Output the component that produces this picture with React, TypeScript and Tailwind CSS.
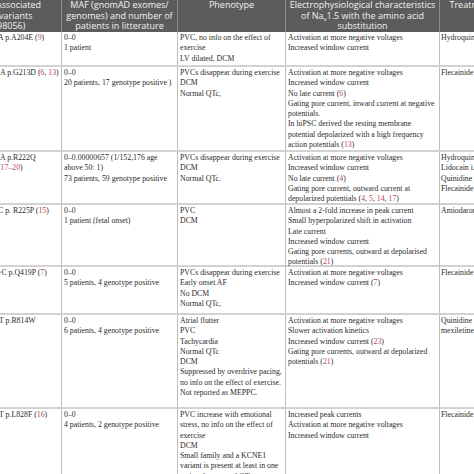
import React from "react";

type C1 = { t: string; ml: string };
type Row = { h: string; c1: C1[]; c2: string[]; c3: string[]; c4: string[]; c5: string[] };

const rows: Row[] = [
  {
    h: "h-[35px]",
    c1: [{ t: "A p.A204E ({9})", ml: "-ml-[2px]" }],
    c2: ["0–0", "1 patient"],
    c3: ["PVC, no info on the effect of", "exercise", "LV dilated, DCM"],
    c4: ["Activation at more negative voltages", "Increased window current"],
    c5: ["Hydroquinidine"],
  },
  {
    h: "h-[85px]",
    c1: [{ t: "A p.G213D ({6}, {13})", ml: "ml-0" }],
    c2: ["0–0", "20 patients, 17 genotype positive )"],
    c3: ["PVCs disappear during exercise", "DCM", "Normal QTc,"],
    c4: [
      "Activation at more negative voltages",
      "Increased window current",
      "No late current ({6})",
      "Gating pore current, inward current at negative",
      "potentials.",
      "In hiPSC derived the resting membrane",
      "potential depolarized with a high frequency",
      "action potentials ({13})",
    ],
    c5: ["Flecainide"],
  },
  {
    h: "h-[53px]",
    c1: [
      { t: "A p.R222Q", ml: "ml-0" },
      { t: "({17–20})", ml: "-ml-[2px]" },
    ],
    c2: ["0–0.00000657 (1/152,176 age", "above 50: 1)", "73 patients, 59 genotype positive"],
    c3: ["PVCs disappear during exercise", "DCM", "Normal QTc."],
    c4: [
      "Activation at more negative voltages",
      "Increased window current",
      "No late current ({4})",
      "Gating pore current, outward current at",
      "depolarized potentials ({4}, {5}, {14}, {17})",
    ],
    c5: ["Hydroquinidine", "Lidocain i.v.", "Quinidine", "Flecainide"],
  },
  {
    h: "h-[62px]",
    c1: [{ t: "C p. R225P ({15})", ml: "-ml-[2px]" }],
    c2: ["0–0", "1 patient (fetal onset)"],
    c3: ["PVC", "DCM"],
    c4: [
      "Almost a 2-fold increase in peak current",
      "Small hyperpolarized shift in activation",
      "Late current",
      "Increased window current",
      "Gating pore currents, outward at depolarised",
      "potentials ({21})",
    ],
    c5: ["Amiodarone"],
  },
  {
    h: "h-[48px]",
    c1: [{ t: ">C p.Q419P ({7})", ml: "-ml-[3px]" }],
    c2: ["0–0", "5 patients, 4 genotype positive"],
    c3: ["PVCs disappear during exercise", "Early onset AF", "No DCM", "Normal QTc,"],
    c4: ["Activation at more negative voltages", "Increased window current ({7})"],
    c5: ["Flecainide"],
  },
  {
    h: "h-[94px]",
    c1: [{ t: "T p.R814W", ml: "-ml-[1px]" }],
    c2: ["0–0", "6 patients, 4 genotype positive"],
    c3: [
      "Atrial flutter",
      "PVC",
      "Tachycardia",
      "Normal QTc",
      "DCM",
      "Suppressed by overdrive pacing,",
      "no info on the effect of exercise.",
      "Not reported as MEPPC.",
    ],
    c4: [
      "Activation at more negative voltages",
      "Slower activation kinetics",
      "Increased window current ({23})",
      "Gating pore currents, outward at depolarized",
      "potentials ({21})",
    ],
    c5: ["Quinidine", "mexiletine"],
  },
  {
    h: "h-[80px]",
    c1: [{ t: "T p.L828F ({16})", ml: "-ml-[1px]" }],
    c2: ["0–0", "4 patients, 2 genotype positive"],
    c3: [
      "PVC increase with emotional",
      "stress, no info on the effect of",
      "exercise",
      "DCM",
      "Small family and a KCNE1",
      "variant is present at least in one",
      "patient but normal QTc",
    ],
    c4: ["Increased peak currents", "Activation at more negative voltages", "Increased window current"],
    c5: ["Flecainide"],
  },
];

function Line({ t, cls = "" }: { t: string; cls?: string }) {
  const parts = t.split(/(\{[^}]*\})/);
  return (
    <div className={"whitespace-nowrap " + cls}>
      {parts.map((p, i) =>
        p.startsWith("{") ? (
          <span key={i} className="text-[#b4475a]">
            {p.slice(1, -1)}
          </span>
        ) : (
          <span key={i}>{p}</span>
        )
      )}
    </div>
  );
}

const grid = "grid grid-cols-[61px_116px_108px_154px_64px] w-[503px]";

export default function App() {
  return (
    <div className="w-[474px] h-[474px] overflow-hidden bg-white">
      <div className={grid + " h-[32px] bg-[#5c5c5c] text-[#f2f2f2] font-['Open_Sans',sans-serif] text-[9px] leading-[10.5px]"}>
        <div className="overflow-hidden">
          <div className="whitespace-nowrap -ml-[4px]">Associated</div>
          <div className="whitespace-nowrap -ml-[1px]">variants</div>
          <div className="whitespace-nowrap -ml-[3px]">98056)</div>
        </div>
        <div className="border-l border-[#8c8c8c] text-center">
          <div>MAF (gnomAD exomes/</div>
          <div>genomes) and number of</div>
          <div>patients in litterature</div>
        </div>
        <div className="border-l border-[#8c8c8c] text-center">
          <div>Phenotype</div>
        </div>
        <div className="border-l border-[#8c8c8c] text-center">
          <div>Electrophysiological characteristics</div>
          <div>
            of Na<sub className="text-[6px] align-baseline relative top-[2px]">v</sub>1.5 with the amino acid
          </div>
          <div>substitution</div>
        </div>
        <div className="border-l border-[#8c8c8c] text-center">
          <div>Treatment</div>
        </div>
      </div>
      <div className="font-['Liberation_Serif',serif] text-[7.8px] leading-[10.3px] text-[#2b2b2b]">
        {rows.map((r, i) => (
          <div key={i} className={grid + " " + r.h + " border-b-2 border-[#d2d2d2]"}>
            <div className="overflow-hidden pt-[1px]">
              {r.c1.map((l, j) => (
                <Line key={j} t={l.t} cls={l.ml} />
              ))}
            </div>
            <div className="border-l border-[#bdbdbd] pl-[2px] pt-[1px]">
              {r.c2.map((l, j) => (
                <Line key={j} t={l} />
              ))}
            </div>
            <div className="border-l border-[#bdbdbd] pl-[2px] pt-[1px]">
              {r.c3.map((l, j) => (
                <Line key={j} t={l} />
              ))}
            </div>
            <div className="border-l border-[#bdbdbd] pl-[2px] pt-[1px]">
              {r.c4.map((l, j) => (
                <Line key={j} t={l} />
              ))}
            </div>
            <div className="border-l border-[#bdbdbd] pl-[1px] pt-[1px]">
              {r.c5.map((l, j) => (
                <Line key={j} t={l} />
              ))}
            </div>
          </div>
        ))}
      </div>
    </div>
  );
}
